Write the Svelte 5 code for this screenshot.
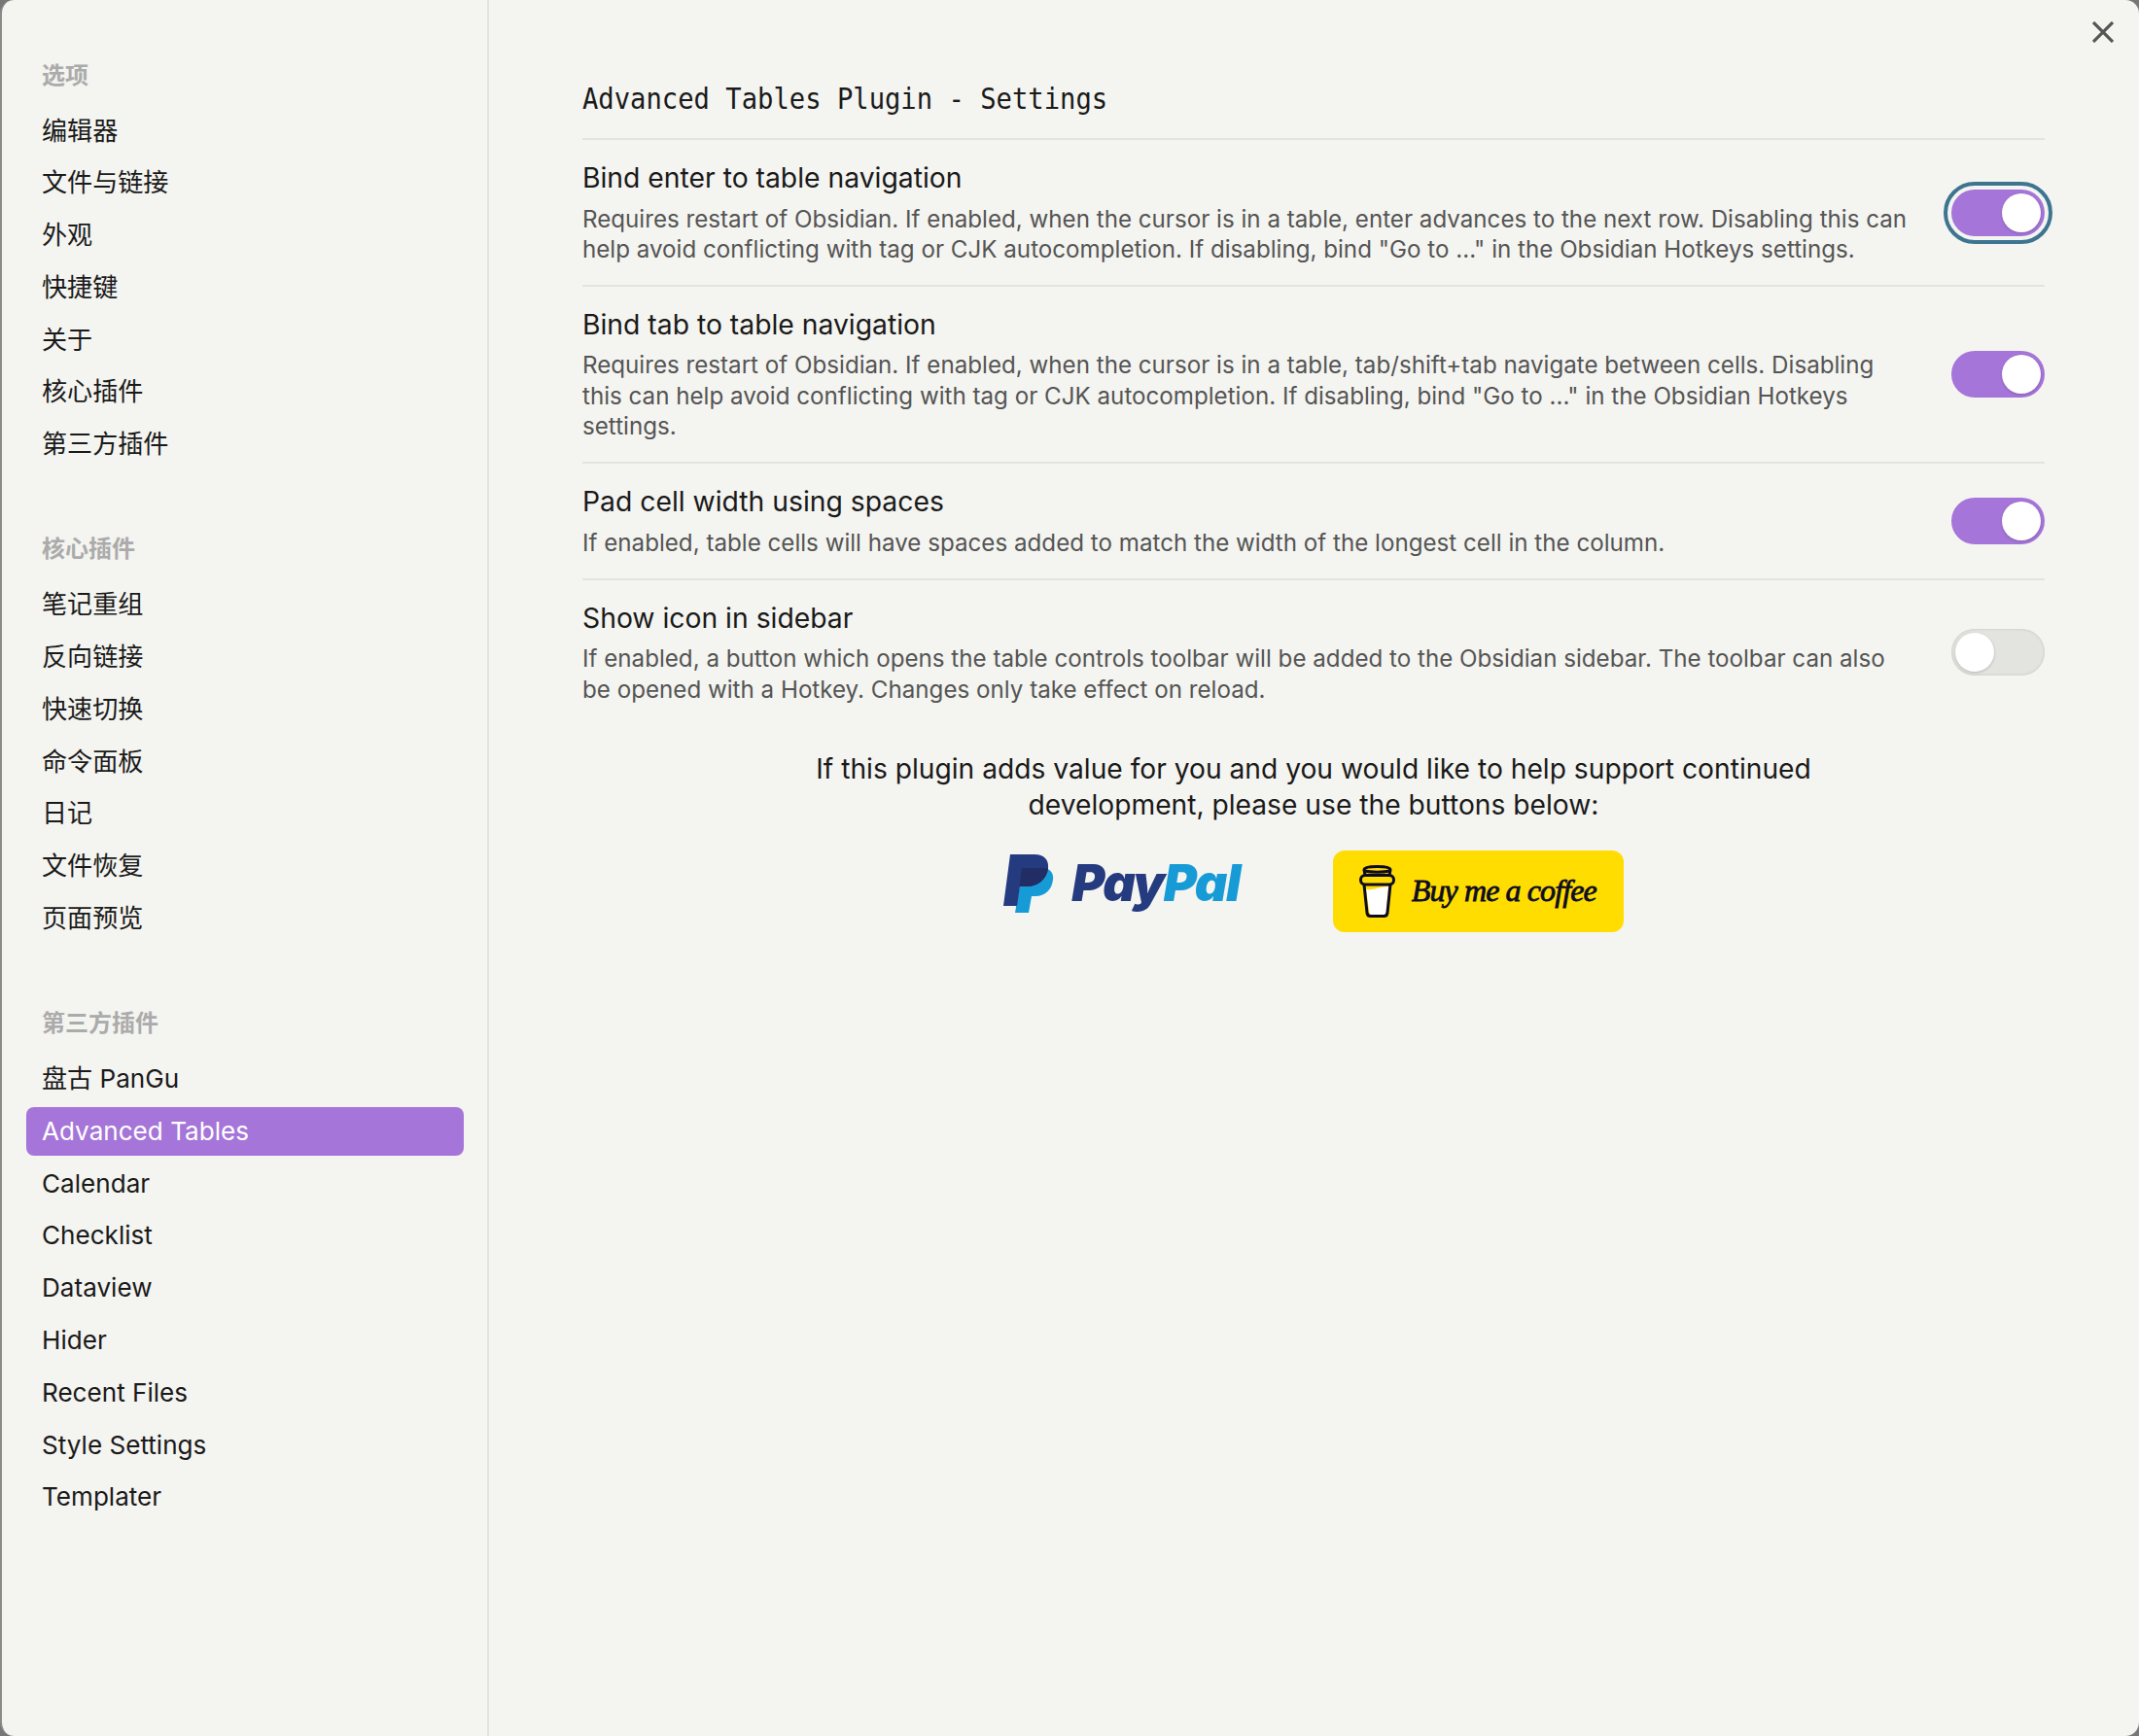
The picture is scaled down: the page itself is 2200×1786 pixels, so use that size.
<script>
  const groups = [
    { title: "选项", items: ["编辑器", "文件与链接", "外观", "快捷键", "关于", "核心插件", "第三方插件"] },
    { title: "核心插件", items: ["笔记重组", "反向链接", "快速切换", "命令面板", "日记", "文件恢复", "页面预览"] },
    {
      title: "第三方插件",
      items: ["盘古 PanGu", "Advanced Tables", "Calendar", "Checklist", "Dataview", "Hider", "Recent Files", "Style Settings", "Templater"]
    }
  ];

  const settings = [
    {
      name: "Bind enter to table navigation",
      desc: 'Requires restart of Obsidian. If enabled, when the cursor is in a table, enter advances to the next row. Disabling this can help avoid conflicting with tag or CJK autocompletion. If disabling, bind "Go to ..." in the Obsidian Hotkeys settings.',
      on: true,
      focused: true
    },
    {
      name: "Bind tab to table navigation",
      desc: 'Requires restart of Obsidian. If enabled, when the cursor is in a table, tab/shift+tab navigate between cells. Disabling this can help avoid conflicting with tag or CJK autocompletion. If disabling, bind "Go to ..." in the Obsidian Hotkeys settings.',
      on: true
    },
    {
      name: "Pad cell width using spaces",
      desc: "If enabled, table cells will have spaces added to match the width of the longest cell in the column.",
      on: true
    },
    {
      name: "Show icon in sidebar",
      desc: "If enabled, a button which opens the table controls toolbar will be added to the Obsidian sidebar. The toolbar can also be opened with a Hotkey. Changes only take effect on reload.",
      on: false
    }
  ];
</script>

<div class="window">
  <nav class="sidebar">
    {#each groups as group}
      <div class="group">
        <div class="groupTitle">{group.title}</div>
        {#each group.items as item}
          <div class="navItem" class:active={item === "Advanced Tables"}>{item}</div>
        {/each}
      </div>
    {/each}
  </nav>

  <main class="content">
    <h2 class="title">Advanced Tables Plugin - Settings</h2>

    {#each settings as s}
      <div class="setting">
        <div class="info">
          <div class="name">{s.name}</div>
          <div class="desc">{s.desc}</div>
        </div>
        <div class="toggle" class:on={s.on} class:focused={s.focused}>
          <div class="knob"></div>
        </div>
      </div>
    {/each}

    <div class="support">
      <p>If this plugin adds value for you and you would like to help support continued development, please use the buttons below:</p>
      <div class="supportLinks">
        <div class="paypal">
          <svg width="52" height="60" viewBox="0 0 52 60">
            <path fill="#179bd7" d="M20 14H40C48 14 52 19 51 26C50 36 43 43 33 43H29L26 60H12Z" />
            <path fill="#253b80" d="M7 0H32C42 0 47 6 46 14C45 26 35 33 24 33H17L14 53H0Z" />
            <path fill="#222d65" d="M19 14H44C45.500 14 46 14 46 15C44 26 35 33 24 33H16.500Z" />
          </svg>
          <span class="payText"><span class="pay">Pay</span><span class="pal">Pal</span></span>
        </div>
        <div class="coffee">
          <svg width="37" height="54" viewBox="0 0 37 54" fill="none" stroke="#0d0c23" stroke-width="3">
            <path d="M7 25c8 1 14-3 23-3l-2.500 27c-.2 1-1 2-2.500 2H13c-1.500 0-2.300-1-2.500-2z" fill="#fff" stroke="none" />
            <path d="M5 20l3 29c.2 2 1.500 3.500 3.500 3.500h14c2 0 3.300-1.500 3.500-3.500l3-29" />
            <rect x="1.500" y="10.500" width="34" height="9.500" rx="4.500" />
            <path d="M6 10l-1-5c0-2.500 6-3.500 13.500-3.500S32 2.500 32 5l-1 5" />
            <path d="M6 6c6 1.500 19 1.500 25 0" />
          </svg>
          <span class="coffeeText">Buy me a coffee</span>
        </div>
      </div>
    </div>
  </main>

  <button class="close" aria-label="Close">
    <svg width="22" height="22" viewBox="0 0 22 22" stroke="#555" stroke-width="3.200">
      <path d="M1 1l20 20M21 1L1 21" />
    </svg>
  </button>
</div>

<style>
  :global(body) {
    margin: 0;
    background: #777;
  }
  .window {
    position: relative;
    width: 2200px;
    height: 1786px;
    box-sizing: border-box;
    display: flex;
    overflow: hidden;
    background: #f4f4f0;
    border-radius: 14px;
    border-left: 2px solid #8a8a88;
    font-family: Inter, "Noto Sans CJK SC", sans-serif;
    color: #1a1a1a;
  }

  .sidebar {
    width: 501px;
    flex: none;
    box-sizing: border-box;
    padding: 61.500px 24px 0 25px;
    border-right: 2px solid #e3e3df;
  }
  .group {
    margin-bottom: 67px;
  }
  .group:last-child {
    margin-bottom: 0;
  }
  .groupTitle {
    height: 32px;
    line-height: 32px;
    margin: 0 0 16px 16px;
    font-size: 24px;
    font-weight: 700;
    color: #ababab;
  }
  .navItem {
    height: 50px;
    line-height: 50px;
    margin-bottom: 3.800px;
    padding-left: 16px;
    border-radius: 8px;
    font-size: 26.100px;
  }
  .navItem:last-child {
    margin-bottom: 0;
  }
  .navItem.active {
    background: #a575d9;
    color: #fff;
  }

  .content {
    flex: 1;
    box-sizing: border-box;
    padding: 0 97px 0 96px;
  }
  .title {
    margin: 0;
    height: 142px;
    box-sizing: border-box;
    padding-top: 83px;
    line-height: 38px;
    font-family: "DejaVu Sans Mono", monospace;
    font-size: 27.200px;
    font-weight: 400;
    color: #1a1a1a;
    transform: scaleY(1.1);
    transform-origin: 0 102px;
  }

  .setting {
    display: flex;
    align-items: center;
    gap: 40px;
    padding: 21px 0 20.400px;
    border-top: 2px solid #e3e3df;
  }
  .info {
    flex: 1;
  }
  .name {
    font-size: 28.300px;
    line-height: 37px;
    margin-bottom: 7.500px;
  }
  .desc {
    font-size: 24.170px;
    line-height: 31.500px;
    color: #555;
  }

  .toggle {
    flex: none;
    width: 96px;
    height: 48px;
    box-sizing: border-box;
    padding: 4px;
    display: flex;
    border-radius: 24px;
    background: #e3e3df;
    box-shadow: inset 0 0 2px 1px #d2d2ce;
  }
  .toggle.on {
    justify-content: flex-end;
    background: #a575d9;
    box-shadow: none;
  }
  .toggle.focused {
    outline: 4px solid #3d7591;
    outline-offset: 4px;
  }
  .knob {
    width: 40px;
    height: 40px;
    border-radius: 50%;
    background: #fff;
    box-shadow: 0 1px 3px rgba(0, 0, 0, 0.2);
  }

  .support {
    padding-top: 27px;
    text-align: center;
  }
  .support p {
    margin: 0 auto;
    width: 1100px;
    font-size: 28.200px;
    line-height: 37px;
  }
  .supportLinks {
    margin-top: 28px;
    display: flex;
    justify-content: center;
    gap: 96px;
  }
  .paypal {
    display: flex;
    align-items: flex-start;
    gap: 18px;
    height: 84px;
    padding-top: 4px;
    box-sizing: border-box;
  }
  .payText {
    font-size: 52px;
    line-height: 60px;
    font-weight: 900;
    font-style: italic;
    letter-spacing: -1.500px;
  }
  .pay {
    color: #253b80;
  }
  .pal {
    color: #179bd7;
  }
  .coffee {
    width: 299px;
    height: 84px;
    box-sizing: border-box;
    padding-left: 27px;
    display: flex;
    align-items: center;
    gap: 17px;
    background: #ffdd00;
    border-radius: 12px;
  }
  .coffeeText {
    font-family: "Liberation Serif", serif;
    font-size: 32px;
    font-style: italic;
    white-space: nowrap;
    color: #0d0c23;
    letter-spacing: -0.900px;
    -webkit-text-stroke: 0.800px #0d0c23;
  }

  .close {
    position: absolute;
    top: 22px;
    right: 26px;
    padding: 0;
    border: none;
    background: none;
    display: flex;
  }
</style>
